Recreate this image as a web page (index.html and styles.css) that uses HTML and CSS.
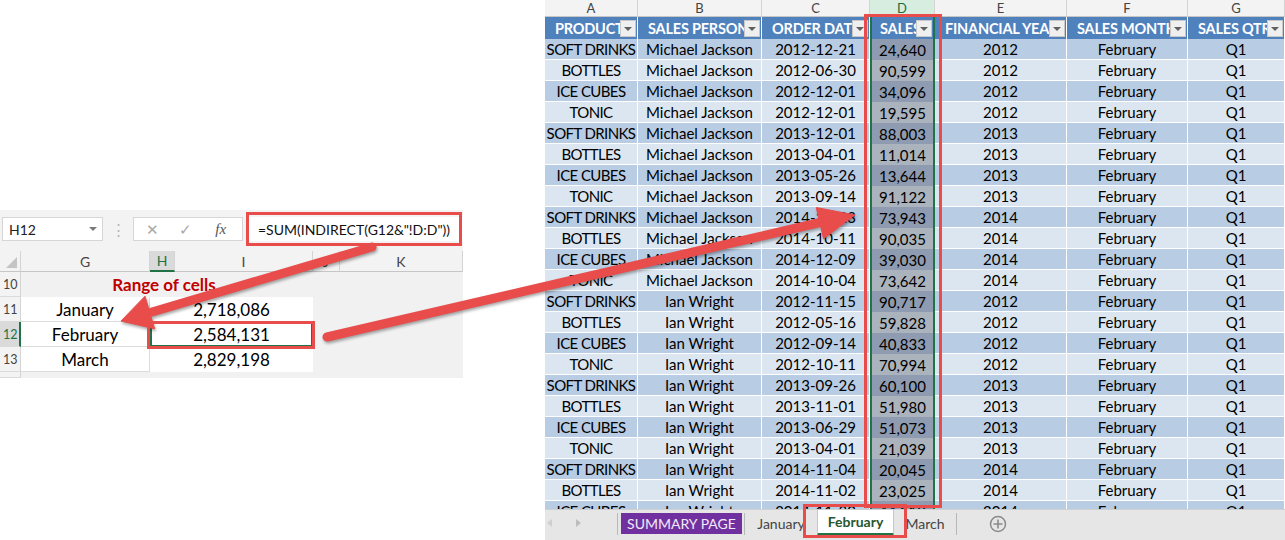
FILE: index.html
```html
<!DOCTYPE html>
<html>
<head>
<meta charset="utf-8">
<title>INDIRECT range of cells</title>
<link rel="stylesheet" href="styles.css">
</head>
<body>
<div class="left">
  <div class="xl">
    <div class="fbar">
      <div class="namebox"><span>H12</span><span class="nb-arrow"></span></div>
      <div class="vdots">⋮</div>
      <div class="fxbox"><span class="fx-x">✕</span><span class="fx-ok">✓</span><span class="fx-f">fx</span></div>
      <div class="formula">=SUM(INDIRECT(G12&amp;"!D:D"))</div>
    </div>
    <div class="lgrid">
      <div class="corner"><span class="tri"></span></div>
      <div class="lh">G</div><div class="lh lh-sel">H</div><div class="lh">I</div><div class="lh">J</div><div class="lh">K</div>

      <div class="rn">10</div><div class="title">Range of cells</div><div class="e"></div><div class="e"></div>
      <div class="rn">11</div><div class="wc">January</div><div class="wc wn">2,718,086</div><div class="e"></div><div class="e"></div>
      <div class="rn rn-sel">12</div><div class="wc">February</div><div class="wc wn sel">2,584,131</div><div class="e"></div><div class="e"></div>
      <div class="rn">13</div><div class="wc">March</div><div class="wc wn">2,829,198</div><div class="e"></div><div class="e"></div>
      <div class="rn rn-part"></div><div class="e"></div><div class="e"></div><div class="e"></div><div class="e"></div><div class="e"></div>
    </div>
  </div>
</div>

<div class="sheet">
  <div class="row letters">
    <div>A</div><div>B</div><div>C</div><div class="dsel">D</div><div>E</div><div>F</div><div>G</div>
  </div>
  <div class="table">
    <div class="row head">
      <div><span class="t">PRODUCTS</span><i class="dd"></i></div>
      <div><span class="t">SALES PERSON</span><i class="dd"></i></div>
      <div><span class="t">ORDER DATE</span><i class="dd"></i></div>
      <div class="d"><span class="t">SALES</span><i class="dd"></i></div>
      <div><span class="t">FINANCIAL YEAR</span><i class="dd"></i></div>
      <div><span class="t">SALES MONTH</span><i class="dd"></i></div>
      <div><span class="t">SALES QTR</span><i class="dd"></i></div>
    </div>
    <div class="row dr dk"><div>SOFT DRINKS</div><div>Michael Jackson</div><div>2012-12-21</div><div class="d">24,640</div><div>2012</div><div>February</div><div>Q1</div></div>
    <div class="row dr lt"><div>BOTTLES</div><div>Michael Jackson</div><div>2012-06-30</div><div class="d">90,599</div><div>2012</div><div>February</div><div>Q1</div></div>
    <div class="row dr dk"><div>ICE CUBES</div><div>Michael Jackson</div><div>2012-12-01</div><div class="d">34,096</div><div>2012</div><div>February</div><div>Q1</div></div>
    <div class="row dr lt"><div>TONIC</div><div>Michael Jackson</div><div>2012-12-01</div><div class="d">19,595</div><div>2012</div><div>February</div><div>Q1</div></div>
    <div class="row dr dk"><div>SOFT DRINKS</div><div>Michael Jackson</div><div>2013-12-01</div><div class="d">88,003</div><div>2013</div><div>February</div><div>Q1</div></div>
    <div class="row dr lt"><div>BOTTLES</div><div>Michael Jackson</div><div>2013-04-01</div><div class="d">11,014</div><div>2013</div><div>February</div><div>Q1</div></div>
    <div class="row dr dk"><div>ICE CUBES</div><div>Michael Jackson</div><div>2013-05-26</div><div class="d">13,644</div><div>2013</div><div>February</div><div>Q1</div></div>
    <div class="row dr lt"><div>TONIC</div><div>Michael Jackson</div><div>2013-09-14</div><div class="d">91,122</div><div>2013</div><div>February</div><div>Q1</div></div>
    <div class="row dr dk"><div>SOFT DRINKS</div><div>Michael Jackson</div><div>2014-11-23</div><div class="d">73,943</div><div>2014</div><div>February</div><div>Q1</div></div>
    <div class="row dr lt"><div>BOTTLES</div><div>Michael Jackson</div><div>2014-10-11</div><div class="d">90,035</div><div>2014</div><div>February</div><div>Q1</div></div>
    <div class="row dr dk"><div>ICE CUBES</div><div>Michael Jackson</div><div>2014-12-09</div><div class="d">39,030</div><div>2014</div><div>February</div><div>Q1</div></div>
    <div class="row dr lt"><div>TONIC</div><div>Michael Jackson</div><div>2014-10-04</div><div class="d">73,642</div><div>2014</div><div>February</div><div>Q1</div></div>
    <div class="row dr dk"><div>SOFT DRINKS</div><div>Ian Wright</div><div>2012-11-15</div><div class="d">90,717</div><div>2012</div><div>February</div><div>Q1</div></div>
    <div class="row dr lt"><div>BOTTLES</div><div>Ian Wright</div><div>2012-05-16</div><div class="d">59,828</div><div>2012</div><div>February</div><div>Q1</div></div>
    <div class="row dr dk"><div>ICE CUBES</div><div>Ian Wright</div><div>2012-09-14</div><div class="d">40,833</div><div>2012</div><div>February</div><div>Q1</div></div>
    <div class="row dr lt"><div>TONIC</div><div>Ian Wright</div><div>2012-10-11</div><div class="d">70,994</div><div>2012</div><div>February</div><div>Q1</div></div>
    <div class="row dr dk"><div>SOFT DRINKS</div><div>Ian Wright</div><div>2013-09-26</div><div class="d">60,100</div><div>2013</div><div>February</div><div>Q1</div></div>
    <div class="row dr lt"><div>BOTTLES</div><div>Ian Wright</div><div>2013-11-01</div><div class="d">51,980</div><div>2013</div><div>February</div><div>Q1</div></div>
    <div class="row dr dk"><div>ICE CUBES</div><div>Ian Wright</div><div>2013-06-29</div><div class="d">51,073</div><div>2013</div><div>February</div><div>Q1</div></div>
    <div class="row dr lt"><div>TONIC</div><div>Ian Wright</div><div>2013-04-01</div><div class="d">21,039</div><div>2013</div><div>February</div><div>Q1</div></div>
    <div class="row dr dk"><div>SOFT DRINKS</div><div>Ian Wright</div><div>2014-11-04</div><div class="d">20,045</div><div>2014</div><div>February</div><div>Q1</div></div>
    <div class="row dr lt"><div>BOTTLES</div><div>Ian Wright</div><div>2014-11-02</div><div class="d">23,025</div><div>2014</div><div>February</div><div>Q1</div></div>
    <div class="row dr dk part"><div>ICE CUBES</div><div>Ian Wright</div><div>2014-11-30</div><div class="d">44,112</div><div>2014</div><div>February</div><div>Q1</div></div>
  </div>
  <div class="tabs">
    <div class="nav">
      <svg width="8" height="10" viewBox="0 0 8 10"><path d="M6 1 L1 5 L6 9 Z" fill="#cfcfcf"/></svg>
      <svg width="8" height="10" viewBox="0 0 8 10"><path d="M2 1 L7 5 L2 9 Z" fill="#bdbdbd"/></svg>
    </div>
    <div class="sep"></div>
    <div class="tab t-sum">SUMMARY PAGE</div>
    <div class="sep sep2"></div>
    <div class="tab t-jan">January</div>
    <div class="tab t-feb">February</div>
    <div class="tab t-mar">March</div>
    <div class="sep"></div>
    <svg class="plus" width="18" height="18" viewBox="0 0 18 18"><circle cx="9" cy="9" r="7.5" fill="none" stroke="#8a8a8a" stroke-width="1.5"/><path d="M9 4.5 V13.5 M4.5 9 H13.5" stroke="#8a8a8a" stroke-width="1.6"/></svg>
  </div>
</div>

<svg class="marks" width="1285" height="540" viewBox="0 0 1285 540">
  <g class="arrow">
    <line class="shaft" x1="372" y1="247" x2="152" y2="312"/>
    <polygon points="121,321 145,296.2 154.6,328.8"/>
    <line class="shaft" x1="327" y1="337" x2="822" y2="222"/>
    <polygon points="855,215 816.3,207.5 823.5,238.7"/>
  </g>
  <rect class="box" x="247.5" y="213.5" width="213" height="31"/>
  <rect class="box" x="148.5" y="322.5" width="165" height="25"/>
  <rect class="box" x="865.5" y="15.5" width="75" height="491"/>
  <rect class="box" x="804.5" y="505.5" width="101" height="31"/>
</svg>
</body>
</html>
```

FILE: styles.css
```css
* { box-sizing: border-box; }

body {
  margin: 0;
  width: 1285px;
  height: 540px;
  overflow: hidden;
  display: flex;
  position: relative;
  background: #fff;
  color: #000;
  font-family: Lato, "Liberation Sans", sans-serif;
}

/* ---------- left excel snippet ---------- */
.left { flex: none; width: 545px; padding-top: 210px; }
.xl {
  width: 463px;
  height: 168px;
  background: #f1f1f1;
  display: flex;
  flex-direction: column;
}
.fbar {
  flex: none;
  height: 41px;
  display: flex;
  align-items: flex-start;
  padding: 7px 0 0 2px;
  background: #f3f3f3;
}
.namebox {
  width: 101px;
  height: 24px;
  background: #fff;
  border: 1px solid #d6d6d6;
  display: flex;
  align-items: center;
  justify-content: space-between;
  padding: 0 5px 0 6px;
  font-size: 14px;
  color: #222;
}
.nb-arrow {
  width: 0; height: 0;
  border-left: 4px solid transparent;
  border-right: 4px solid transparent;
  border-top: 4px solid #7a7a7a;
}
.vdots {
  width: 30px; height: 24px;
  display: flex; align-items: center; justify-content: center;
  color: #b5b5b5; font-size: 15px;
}
.fxbox {
  width: 110px; height: 24px;
  background: #fff;
  border: 1px solid #d6d6d6;
  display: flex; align-items: center;
  color: #a8a8a8;
  font-size: 15px;
}
.fx-x { width: 38px; text-align: center; }
.fx-ok { width: 30px; text-align: center; }
.fx-f {
  width: 44px; text-align: center;
  font-family: "Liberation Serif", serif;
  font-style: italic; color: #555; font-size: 15px;
}
.formula {
  margin-left: 4px;
  width: 216px; height: 24px;
  background: #fff;
  padding-left: 11px;
  font-size: 14px;
  display: flex; align-items: center;
  white-space: nowrap;
  color: #111;
}
.lgrid {
  display: grid;
  grid-template-columns: 21px 129px 25px 138px 27px 123px;
  grid-template-rows: 21px 25px 25px 25px 25px 6px;
}
.corner {
  background: #f3f3f3;
  border-right: 1px solid #d4d4d4;
  border-bottom: 1px solid #c6c6c6;
  display: flex; align-items: flex-end; justify-content: flex-end;
  padding: 0 3px 3px 0;
}
.tri {
  width: 0; height: 0;
  border-left: 11px solid transparent;
  border-bottom: 11px solid #c4c4c4;
}
.lh {
  background: #f3f3f3;
  border-right: 1px solid #d4d4d4;
  border-bottom: 1px solid #c6c6c6;
  display: flex; align-items: center; justify-content: center;
  font-size: 14px; color: #444;
}
.lh-sel { background: #dadada; border-bottom: 2px solid #217346; color: #217346; }
.rn {
  background: #f3f3f3;
  border-right: 1px solid #d4d4d4;
  border-bottom: 1px solid #dadada;
  font-size: 12.5px; color: #444;
  display: flex; align-items: center;
  padding-left: 3px;
}
.rn-sel { background: #dadada; border-right: 2px solid #217346; color: #217346; }
.title {
  grid-column: span 3;
  color: #c00000; font-weight: 700; font-size: 17px;
  display: flex; align-items: center; justify-content: center;
  padding-right: 6px;
}
.wc {
  background: #fff;
  display: flex; align-items: center; justify-content: center;
  font-size: 17px;
  border-bottom: 1px solid #dcdcdc;
  border-right: 1px solid #dcdcdc;
}
.wn { grid-column: span 2; border-bottom: none; border-right: none; }
.sel { border: 2px solid #217346; }

/* ---------- right sheet ---------- */
.sheet {
  flex: none;
  width: 740px;
  height: 540px;
  display: flex;
  flex-direction: column;
}
.row {
  display: grid;
  grid-template-columns: 93px 124px 108px 65px 132px 121px 97px;
}
.letters { flex: none; height: 17px; background: #f3f3f3; }
.letters > div {
  border-right: 1px solid #d4d4d4;
  border-bottom: 1px solid #c6c6c6;
  font-size: 13px; color: #444;
  display: flex; align-items: center; justify-content: center;
}
.letters .dsel { background: #d6eddf; color: #1e6b41; border-bottom: 1px solid #217346; }
.table { flex: 1; overflow: hidden; }
.head { height: 22px; background: #4f81bd; }
.head > div {
  display: flex; align-items: center;
  padding-left: 10px;
  border-right: 1px solid #fff;
  color: #fff; font-weight: 700; font-size: 14.5px;
  letter-spacing: -0.2px;
  overflow: hidden;
}
.head .t { flex: 1; overflow: hidden; white-space: nowrap; }
.dd {
  flex: none;
  width: 16px; height: 17px;
  margin-right: 1px;
  background: #efefef;
  border: 1px solid #c8c8c8;
  display: flex; align-items: flex-end; justify-content: center;
  padding-bottom: 5px;
}
.dd::after {
  content: "";
  border-left: 4px solid transparent;
  border-right: 4px solid transparent;
  border-top: 4px solid #606060;
}
.head .d { border-left: 2px solid #217346; border-right: 2px solid #217346; padding-left: 8px; }
.dr { height: 21px; }
.dr > div {
  border-right: 1px solid #fff;
  border-bottom: 1px solid #fff;
  display: flex; align-items: center; justify-content: center;
  font-size: 15px;
  white-space: nowrap; overflow: hidden;
}
.dr > div:first-child { letter-spacing: -0.6px; }
.dr.part { height: 8px; }
.dr.part > div { align-items: flex-start; line-height: 20px; border-bottom: none; }
.dk { background: #b8cce4; }
.lt { background: #dce6f1; }
.dr .d { border-left: 2px solid #217346; border-right: 2px solid #217346; border-bottom: none; }
.dk .d { background: #8e9bb0; }
.lt .d { background: #abb3bd; }

/* sheet tabs */
.tabs {
  flex: none;
  height: 31px;
  background: #e6e6e6;
  border-top: 1px solid #d0d0d0;
  display: flex;
  align-items: flex-start;
}
.nav {
  width: 72px; height: 26px;
  display: flex; align-items: center;
  gap: 20px; padding-left: 1px;
}
.sep { width: 1px; height: 22px; background: #b8b8b8; margin-top: 3px; }
.sep2 { margin-left: 2px; }
.tab {
  height: 26px;
  display: flex; align-items: center; justify-content: center;
  font-size: 14px; color: #444;
}
.t-sum {
  margin-left: 3px; margin-top: 3px;
  width: 121px; height: 21px;
  background: #7030a0; color: #f1eaf7;
}
.t-jan { width: 72px; }
.t-feb {
  width: 77px;
  background: #fff;
  border-left: 1px solid #c8c8c8;
  border-right: 1px solid #c8c8c8;
  border-bottom: 3px solid #217346;
  font-weight: 700; color: #27562f;
}
.t-mar { width: 62px; }
.plus { margin: 5px 0 0 32px; }

/* annotations */
.marks { position: absolute; left: 0; top: 0; pointer-events: none; }
.box { fill: none; stroke: #e84c4b; stroke-width: 3; }
.arrow { fill: #e84c4b; stroke: #e84c4b; filter: drop-shadow(1px 2px 1.5px rgba(0,0,0,0.35)); }
.arrow polygon { stroke-width: 1; stroke-linejoin: round; }
.shaft { stroke-width: 9; stroke-linecap: round; fill: none; }
```
